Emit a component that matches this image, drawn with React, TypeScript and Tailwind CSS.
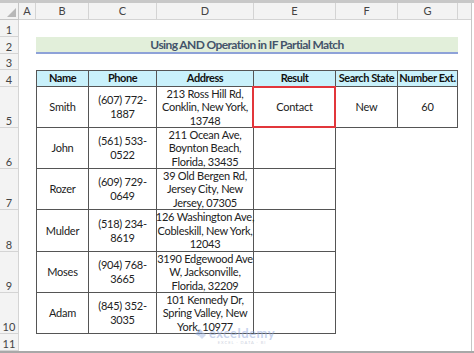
const cols = ["A", "B", "C", "D", "E", "F", "G"];

const headers = ["Name", "Phone", "Address", "Result", "Search State", "Number Ext."];

const people = [
  { name: "Smith", phone: ["(607) 772-", "1887"], address: ["213 Ross Hill Rd,", "Conklin, New York,", "13748"] },
  { name: "John", phone: ["(561) 533-", "0522"], address: ["211 Ocean Ave,", "Boynton Beach,", "Florida, 33435"] },
  { name: "Rozer", phone: ["(609) 729-", "0649"], address: ["39 Old Bergen Rd,", "Jersey City, New", "Jersey, 07305"] },
  { name: "Mulder", phone: ["(518) 234-", "8619"], address: ["126 Washington Ave,", "Cobleskill, New York,", "12043"] },
  { name: "Moses", phone: ["(904) 768-", "3665"], address: ["3190 Edgewood Ave", "W, Jacksonville,", "Florida, 32209"] },
  { name: "Adam", phone: ["(845) 352-", "3035"], address: ["101 Kennedy Dr,", "Spring Valley, New", "York, 10977"] },
];

function RowNum({ n }: { n: number }) {
  return (
    <div className="flex items-end justify-center border-b border-r border-[#d4d4d4] bg-[#f3f3f3] pb-px text-[11px] leading-none text-[#444]">
      {n}
    </div>
  );
}

function Lines({ lines }: { lines: string[] }) {
  return (
    <>
      {lines.map((l) => (
        <span key={l} className="block whitespace-nowrap">
          {l}
        </span>
      ))}
    </>
  );
}

const cell =
  "flex flex-col items-center justify-center border-b border-r border-[#555] text-center text-[11px] leading-[13.6px] tracking-[-0.25px] text-[#222]";

const head =
  "flex items-center justify-center whitespace-nowrap border-b border-r border-t border-[#555] bg-[#c9f1fb] text-[11px] font-bold tracking-[-0.45px] text-[#111]";

export default function App() {
  return (
    <div className="relative h-[353px] w-[474px] overflow-hidden bg-white font-[family-name:Lato,sans-serif]">
      <div className="h-[3px] bg-[#c8c8c8]" />

      <div className="grid w-[472px] grid-cols-[19px_17px_53px_68px_97px_82px_62px_60px_13px] grid-rows-[17px_17px_17px_16px_17px_41px_41px_41px_42px_41px_41px_17px] border-r border-[#c6c6c6]">
        {/* column headers */}
        <div className="relative border-b border-r border-[#c6c6c6] bg-[#f3f3f3]">
          <svg className="absolute bottom-[2px] right-[2px]" width="9" height="9" viewBox="0 0 9 9">
            <path d="M9 0 L9 9 L0 9 Z" fill="#b8b8b8" />
          </svg>
        </div>
        {cols.map((c) => (
          <div
            key={c}
            className="flex items-center justify-center border-b border-r border-[#d4d4d4] bg-[#f3f3f3] text-[11px] text-[#444]"
          >
            {c}
          </div>
        ))}
        <div className="border-b border-[#d4d4d4] bg-[#f3f3f3]" />

        {/* row 1 */}
        <RowNum n={1} />
        <div className="col-span-8" />

        {/* row 2 - title */}
        <RowNum n={2} />
        <div />
        <div className="col-span-6 flex items-center justify-center border-b-2 border-[#8ea2d8] bg-[#e2efda] text-[12px] font-bold tracking-[-0.6px] text-[#44546a]">
          Using AND Operation in IF Partial Match
        </div>
        <div />

        {/* row 3 */}
        <RowNum n={3} />
        <div className="col-span-8" />

        {/* row 4 - table header */}
        <RowNum n={4} />
        <div />
        {headers.map((h, i) => (
          <div key={h} className={i === 0 ? head + " border-l" : head}>
            {h}
          </div>
        ))}
        <div />

        {/* rows 5-10 */}
        {people.map((p, i) => (
          <div key={p.name} className="contents">
            <RowNum n={i + 5} />
            <div />
            <div className={cell + " border-l"}>{p.name}</div>
            <div className={cell}>
              <Lines lines={p.phone} />
            </div>
            <div className={cell}>
              <Lines lines={p.address} />
            </div>
            <div className={cell + " relative"}>
              {i === 0 && (
                <>
                  <div className="absolute -bottom-px -left-[2px] -right-px -top-px border-2 border-[#e2363b]" />
                  Contact
                </>
              )}
            </div>
            {i === 0 ? (
              <>
                <div className={cell}>New</div>
                <div className={cell}>60</div>
                <div />
              </>
            ) : (
              <div className="col-span-3" />
            )}
          </div>
        ))}

        {/* row 11 */}
        <RowNum n={11} />
        <div className="col-span-8" />
      </div>

      <div className="h-[2px] bg-[#a8a8a8]" />

      {/* watermark */}
      <div className="pointer-events-none absolute left-[194px] top-[327px] flex items-start gap-[2px] opacity-50">
        <svg width="13" height="13" viewBox="0 0 13 13">
          <path d="M1 7 L6 2 L9 5 L5 9 Z" fill="#7f9fd8" />
          <path d="M5 9 L9 5 L12 8 L8 12 Z" fill="#a8bde6" />
        </svg>
        <div className="flex flex-col items-center">
          <span className="text-[13px] font-bold leading-[13px] tracking-[0.5px] text-[#8fa8dc]">exceldemy</span>
          <span className="text-[4px] leading-[6px] tracking-[1px] text-[#9aa6be]">EXCEL · DATA · BI</span>
        </div>
      </div>
    </div>
  );
}
